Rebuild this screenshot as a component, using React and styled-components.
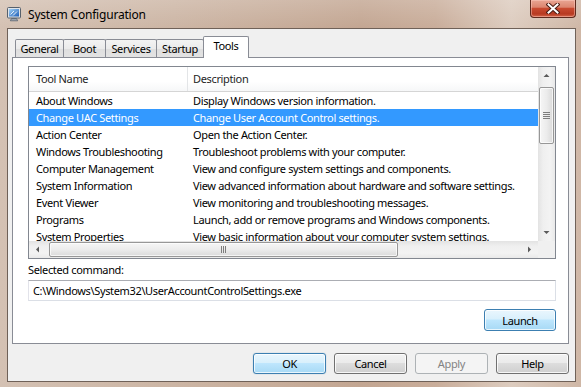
import React from "react";
import styled, { createGlobalStyle, css } from "styled-components";

const GlobalStyle = createGlobalStyle`
  html, body {
    margin: 0;
    padding: 0;
  }
  body {
    background: #c9b2a1;
    font-family: "Noto Sans", "Open Sans", sans-serif;
    font-size: 11px;
    letter-spacing: -0.35px;
  }
`;

const tools = [
  ["About Windows", "Display Windows version information."],
  ["Change UAC Settings", "Change User Account Control settings."],
  ["Action Center", "Open the Action Center."],
  ["Windows Troubleshooting", "Troubleshoot problems with your computer."],
  ["Computer Management", "View and configure system settings and components."],
  ["System Information", "View advanced information about hardware and software settings."],
  ["Event Viewer", "View monitoring and troubleshooting messages."],
  ["Programs", "Launch, add or remove programs and Windows components."],
  ["System Properties", "View basic information about your computer system settings."],
];

const tabs = [
  { label: "General", width: 49 },
  { label: "Boot", width: 43 },
  { label: "Services", width: 52 },
  { label: "Startup", width: 48 },
  { label: "Tools", width: 46, active: true },
];

const SystemIcon = () => (
  <svg width="16" height="16" viewBox="0 0 16 16">
    <defs>
      <linearGradient id="scr" x1="0" y1="0" x2="1" y2="1">
        <stop offset="0" stopColor="#9fd0f5" />
        <stop offset="1" stopColor="#1f5fb8" />
      </linearGradient>
    </defs>
    <path d="M5.5 12.5h5l1.2 2.3H4.3z" fill="#9aa3ae" stroke="#5d6672" strokeWidth="0.8" />
    <rect x="1.5" y="1.5" width="13" height="10.5" rx="1" fill="#dfe3e8" stroke="#56606c" />
    <rect x="3" y="3" width="10" height="7.5" fill="url(#scr)" />
    <path d="M4.5 8.5l3.5-3.5M7 9.5l4-4" stroke="#ffffff" strokeWidth="1" opacity="0.85" />
  </svg>
);

const CloseGlyph = () => (
  <svg width="14" height="11" viewBox="0 0 14 11">
    <path d="M2.5 1.5l9 8M11.5 1.5l-9 8" stroke="#4a1c14" strokeWidth="4" strokeLinecap="square" />
    <path d="M2.5 1.5l9 8M11.5 1.5l-9 8" stroke="#ffffff" strokeWidth="2" strokeLinecap="square" />
  </svg>
);

const Arrow = ({ dir }) => {
  const paths = {
    up: "M0.5 4 L3.5 1 L6.5 4 Z",
    down: "M0.5 1 L3.5 4 L6.5 1 Z",
    left: "M4 0.5 L1 3.5 L4 6.5 Z",
    right: "M1 0.5 L4 3.5 L1 6.5 Z",
  };
  const vertical = dir === "up" || dir === "down";
  return (
    <svg width={vertical ? 7 : 5} height={vertical ? 5 : 7} viewBox={vertical ? "0 0 7 5" : "0 0 5 7"}>
      <path d={paths[dir]} fill="#5a5a5a" />
    </svg>
  );
};

const App = () => {
  return (
    <>
      <GlobalStyle />
      <Window>
        <TitleBar>
          <SystemIcon />
          <Title>System Configuration</Title>
          <CloseButton>
            <CloseGlyph />
          </CloseButton>
        </TitleBar>
        <Client>
          <TabStrip>
            {tabs.map((t) => (
              <Tab key={t.label} $active={t.active} $width={t.width}>
                {t.label}
              </Tab>
            ))}
          </TabStrip>
          <Panel>
            <ListView>
              <ListContent>
                <HeaderRow>
                  <HeaderCell>Tool Name</HeaderCell>
                  <HeaderCell $divider>Description</HeaderCell>
                </HeaderRow>
                {tools.map(([name, desc], i) => (
                  <Row key={name} $selected={i === 1}>
                    <NameCell>{name}</NameCell>
                    <DescCell>{desc}</DescCell>
                  </Row>
                ))}
              </ListContent>
              <VScroll>
                <VArrowButton>
                  <Arrow dir="up" />
                </VArrowButton>
                <VThumb>
                  <VGrip>
                    <span />
                    <span />
                    <span />
                    <span />
                  </VGrip>
                </VThumb>
                <Spacer />
                <VArrowButton>
                  <Arrow dir="down" />
                </VArrowButton>
              </VScroll>
              <HScroll>
                <HArrowButton>
                  <Arrow dir="left" />
                </HArrowButton>
                <HThumb>
                  <HGrip>
                    <span />
                    <span />
                    <span />
                  </HGrip>
                </HThumb>
                <Spacer />
                <HArrowButton>
                  <Arrow dir="right" />
                </HArrowButton>
              </HScroll>
              <Corner />
            </ListView>
            <Label>Selected command:</Label>
            <TextBox>C:\Windows\System32\UserAccountControlSettings.exe</TextBox>
            <LaunchRow>
              <Button $variant="focus" $width={72}>
                Launch
              </Button>
            </LaunchRow>
          </Panel>
          <ButtonRow>
            <Button $variant="default">OK</Button>
            <Button>Cancel</Button>
            <Button $variant="disabled">Apply</Button>
            <Button>Help</Button>
          </ButtonRow>
        </Client>
      </Window>
    </>
  );
};

export default App;

const Window = styled.div`
  width: 581px;
  height: 387px;
  box-sizing: border-box;
  display: flex;
  flex-direction: column;
  background: linear-gradient(
    90deg,
    #d4c1b3 0%,
    #ccb5a4 30%,
    #c3a692 62%,
    #c9ad9a 75%,
    #ddccbf 88%,
    #cfb7a6 100%
  );
  overflow: hidden;
`;

const TitleBar = styled.div`
  height: 28px;
  flex: 0 0 28px;
  display: flex;
  align-items: center;
  padding-left: 6px;
  background: linear-gradient(rgba(255, 255, 255, 0.18), rgba(255, 255, 255, 0));
`;

const Title = styled.span`
  margin-left: 6px;
  font-size: 12px;
  letter-spacing: -0.2px;
  color: #000;
`;

const CloseButton = styled.div`
  align-self: flex-start;
  margin-left: auto;
  margin-right: 5px;
  width: 46px;
  height: 18px;
  box-sizing: border-box;
  border: 1px solid #5e2a1e;
  border-top: none;
  border-radius: 0 0 4px 4px;
  background: linear-gradient(#e9a593 0%, #dc8670 42%, #c84a30 50%, #b73a22 82%, #d4684c 100%);
  box-shadow: inset 0 0 0 1px rgba(255, 210, 200, 0.45);
  display: flex;
  align-items: center;
  justify-content: center;
`;

const Client = styled.div`
  flex: 1;
  margin: 0 5px 5px 7px;
  border: 1px solid #6f6158;
  background: #f0f0f0;
  padding: 7px 6px 0 4px;
  display: flex;
  flex-direction: column;
`;

const TabStrip = styled.div`
  display: flex;
  align-items: flex-end;
  height: 21px;
  padding-left: 3px;
`;

const Tab = styled.div`
  position: relative;
  width: ${(p) => p.$width}px;
  height: 18px;
  box-sizing: border-box;
  margin-left: -1px;
  border: 1px solid #898c95;
  border-bottom: none;
  border-radius: 2px 2px 0 0;
  background: linear-gradient(#f3f3f3, #ebebeb 50%, #dedede 51%, #e3e3e3);
  line-height: 17px;
  text-align: center;
  color: #000;
  &:first-child {
    margin-left: 0;
  }
  ${(p) =>
    p.$active &&
    css`
      height: 22px;
      margin-bottom: -1px;
      z-index: 1;
      background: #ffffff;
      line-height: 18px;
    `}
`;

const Panel = styled.div`
  height: 287px;
  box-sizing: border-box;
  border: 1px solid #898c95;
  background: #ffffff;
  padding: 8px 12px 0 15px;
  display: flex;
  flex-direction: column;
`;

const ListView = styled.div`
  height: 193px;
  box-sizing: border-box;
  border: 1px solid #828790;
  display: grid;
  grid-template-columns: 1fr 17px;
  grid-template-rows: 1fr 17px;
  background: #fff;
`;

const ListContent = styled.div`
  overflow: hidden;
  min-height: 0;
`;

const HeaderRow = styled.div`
  display: grid;
  grid-template-columns: 158px 1fr;
  height: 25px;
  box-sizing: border-box;
  border-bottom: 1px solid #d5d5d5;
  background: linear-gradient(#ffffff, #ffffff 60%, #f6f7f8);
`;

const HeaderCell = styled.div`
  line-height: 24px;
  color: #1e1e1e;
  padding-left: ${(p) => (p.$divider ? 5 : 7)}px;
  white-space: nowrap;
  ${(p) =>
    p.$divider &&
    css`
      border-left: 1px solid #e3e5e7;
    `}
`;

const Row = styled.div`
  display: grid;
  grid-template-columns: 158px 1fr;
  height: 17px;
  line-height: 17px;
  white-space: nowrap;
  color: ${(p) => (p.$selected ? "#ffffff" : "#000000")};
  background: ${(p) => (p.$selected ? "#3399ff" : "transparent")};
`;

const NameCell = styled.div`
  padding-left: 7px;
  overflow: hidden;
`;

const DescCell = styled.div`
  padding-left: 6px;
  overflow: hidden;
`;

const VScroll = styled.div`
  display: flex;
  flex-direction: column;
  background: linear-gradient(90deg, #e3e3e3, #efefef 30%, #f3f3f3 70%, #e9e9e9);
`;

const VArrowButton = styled.div`
  height: 17px;
  flex: 0 0 17px;
  display: flex;
  align-items: center;
  justify-content: center;
`;

const VThumb = styled.div`
  margin: 3px 1px 0 1px;
  height: 57px;
  box-sizing: border-box;
  border: 1px solid #979797;
  border-radius: 2px;
  background: linear-gradient(90deg, #f6f6f6, #ececec 50%, #dadada);
  box-shadow: inset 0 0 0 1px rgba(255, 255, 255, 0.7);
  display: flex;
  align-items: center;
  justify-content: center;
`;

const VGrip = styled.div`
  display: flex;
  flex-direction: column;
  gap: 1px;
  span {
    display: block;
    width: 7px;
    height: 1px;
    background: #7d7d7d;
  }
`;

const HScroll = styled.div`
  display: flex;
  background: linear-gradient(#e3e3e3, #efefef 30%, #f3f3f3 70%, #e9e9e9);
`;

const HArrowButton = styled.div`
  width: 17px;
  flex: 0 0 17px;
  display: flex;
  align-items: center;
  justify-content: center;
`;

const HThumb = styled.div`
  margin: 1px 0 1px 3px;
  width: 349px;
  box-sizing: border-box;
  border: 1px solid #979797;
  border-radius: 2px;
  background: linear-gradient(#f6f6f6, #ececec 50%, #dadada);
  box-shadow: inset 0 0 0 1px rgba(255, 255, 255, 0.7);
  display: flex;
  align-items: center;
  justify-content: center;
`;

const HGrip = styled.div`
  display: flex;
  gap: 1px;
  span {
    display: block;
    width: 1px;
    height: 7px;
    background: #7d7d7d;
  }
`;

const Spacer = styled.div`
  flex: 1;
`;

const Corner = styled.div`
  background: #f0f0f0;
`;

const Label = styled.div`
  margin-top: 4px;
  line-height: 14px;
  color: #000;
`;

const TextBox = styled.div`
  margin-top: 3px;
  height: 21px;
  box-sizing: border-box;
  border: 1px solid #dbdfe6;
  border-top-color: #abadb3;
  border-left-color: #e2e3ea;
  background: #fff;
  padding-left: 4px;
  line-height: 19px;
  color: #000;
  white-space: nowrap;
`;

const LaunchRow = styled.div`
  display: flex;
  justify-content: flex-end;
  margin-top: 8px;
`;

const ButtonRow = styled.div`
  display: flex;
  justify-content: flex-end;
  gap: 8px;
  margin-top: 9px;
`;

const variants = {
  default: css`
    border-color: #3c7fb1;
    background: linear-gradient(#eaf6fd 0%, #d9f0fc 45%, #bee6fd 50%, #a7d9f5 100%);
    box-shadow: inset 0 0 0 1px rgba(255, 255, 255, 0.75), 0 0 1px rgba(60, 127, 177, 0.6);
  `,
  focus: css`
    border-color: #3c7fb1;
    background: linear-gradient(#eaf6fd 0%, #d9f0fc 45%, #bee6fd 50%, #a7d9f5 100%);
    box-shadow: inset 0 0 0 1px rgba(255, 255, 255, 0.75);
  `,
  disabled: css`
    border-color: #adb2b5;
    background: #f4f4f4;
    color: #838383;
    box-shadow: none;
  `,
};

const Button = styled.div`
  width: ${(p) => p.$width || 73}px;
  height: ${(p) => (p.$width ? 22 : 21)}px;
  box-sizing: border-box;
  border: 1px solid #707070;
  border-radius: 3px;
  background: linear-gradient(#f2f2f2 0%, #ebebeb 45%, #dddddd 50%, #cfcfcf 100%);
  box-shadow: inset 0 0 0 1px rgba(255, 255, 255, 0.8);
  color: #000;
  display: flex;
  align-items: center;
  justify-content: center;
  ${(p) => p.$variant && variants[p.$variant]}
`;
